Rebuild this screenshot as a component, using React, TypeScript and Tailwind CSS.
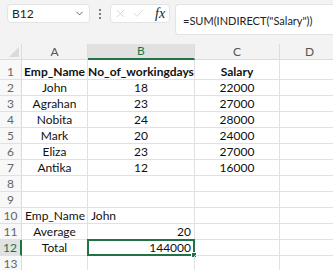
import { ChevronDown, X, Check } from 'lucide-react';

const font = { fontFamily: 'Lato, "Open Sans", sans-serif' };

type Align = 'left' | 'center' | 'right';
type Cell = { v?: string; align?: Align; bold?: boolean };

const rows: Cell[][] = [
  [
    { v: 'Emp_Name', align: 'center', bold: true },
    { v: 'No_of_workingdays', align: 'center', bold: true },
    { v: 'Salary', align: 'center', bold: true },
    {},
  ],
  [{ v: 'John', align: 'center' }, { v: '18', align: 'center' }, { v: '22000', align: 'center' }, {}],
  [{ v: 'Agrahan', align: 'center' }, { v: '23', align: 'center' }, { v: '27000', align: 'center' }, {}],
  [{ v: 'Nobita', align: 'center' }, { v: '24', align: 'center' }, { v: '28000', align: 'center' }, {}],
  [{ v: 'Mark', align: 'center' }, { v: '20', align: 'center' }, { v: '24000', align: 'center' }, {}],
  [{ v: 'Eliza', align: 'center' }, { v: '23', align: 'center' }, { v: '27000', align: 'center' }, {}],
  [{ v: 'Antika', align: 'center' }, { v: '12', align: 'center' }, { v: '16000', align: 'center' }, {}],
  [{}, {}, {}, {}],
  [{}, {}, {}, {}],
  [{ v: 'Emp_Name', align: 'left' }, { v: 'John', align: 'left' }, {}, {}],
  [{ v: 'Average', align: 'center' }, { v: '20', align: 'right' }, {}, {}],
  [{ v: 'Total', align: 'center' }, { v: '144000', align: 'right' }, {}, {}],
  [{}, {}, {}, {}],
];

const colW = ['w-[66px]', 'w-[107px]', 'w-[85px]', 'w-[60px]'];

const alignCls: Record<Align, string> = {
  left: 'justify-start pl-[3px]',
  center: 'justify-center',
  right: 'justify-end pr-[3px]',
};

function Toolbar() {
  return (
    <div className="h-[44px] bg-[#f3f3f3] flex items-start pt-[4px] pl-[7px] gap-[5px] shrink-0">
      <div className="w-[83px] h-[19px] bg-white rounded-[4px] border border-[#e3e3e3] flex items-center pl-[4px] pr-[4px] justify-between">
        <span className="text-[12px] leading-[14px] text-[#222]">B12</span>
        <ChevronDown className="w-[11px] h-[11px] text-[#555]" strokeWidth={2} />
      </div>
      <div className="w-[10px] h-[19px] flex flex-col items-center justify-center gap-[2px]">
        <span className="w-[2px] h-[2px] bg-[#555] rounded-full" />
        <span className="w-[2px] h-[2px] bg-[#555] rounded-full" />
        <span className="w-[2px] h-[2px] bg-[#555] rounded-full" />
      </div>
      <div className="w-[60px] h-[19px] bg-white rounded-[4px] border border-[#e3e3e3] flex items-center pl-[3px] gap-[5px]">
        <X className="w-[13px] h-[13px] text-[#c2c2c2]" strokeWidth={1.2} />
        <Check className="w-[13px] h-[13px] text-[#c2c2c2]" strokeWidth={1.2} />
        <span
          className="ml-[5px] text-[14px] leading-[14px] italic text-[#222]"
          style={{ fontFamily: '"Liberation Serif", serif' }}
        >
          fx
        </span>
      </div>
      <div className="flex-1 h-[31px] bg-white rounded-l-[4px] border border-r-0 border-[#e3e3e3] pl-[7px] pt-[2px]">
        <span className="text-[11px] leading-[14px] text-[#222]">=SUM(INDIRECT("Salary"))</span>
      </div>
    </div>
  );
}

function HeaderRow() {
  const letters = ['A', 'B', 'C', 'D'];
  return (
    <div className="flex h-[16px] bg-[#f3f3f3]">
      <div className="w-[22px] shrink-0 border-r border-b border-[#dcdcdc] relative">
        <svg className="absolute right-[2px] bottom-[2px]" width="10" height="10" viewBox="0 0 10 10">
          <polygon points="10,0 10,10 0,10" fill="#dadada" />
        </svg>
      </div>
      {letters.map((l, i) => (
        <div
          key={l}
          className={`${colW[i]} shrink-0 flex items-center justify-center text-[12px] leading-[14px] border-r border-[#dcdcdc] ${
            i === 1
              ? 'bg-[#e1e1e1] text-[#217346] border-b-2 border-b-[#217346]'
              : 'text-[#555] border-b border-b-[#dcdcdc]'
          }`}
        >
          {l}
        </div>
      ))}
    </div>
  );
}

export default function App() {
  return (
    <div className="w-[333px] h-[270px] overflow-hidden bg-white flex flex-col" style={font}>
      <Toolbar />
      <HeaderRow />
      {rows.map((r, ri) => {
        const selected = ri === 11;
        return (
          <div key={ri} className={`flex shrink-0 ${ri === 0 ? 'h-[20px]' : 'h-[16px]'}`}>
            <div
              className={`w-[22px] shrink-0 flex items-end justify-center pb-[1px] text-[12px] leading-[13px] border-b border-[#e1e1e1] ${
                selected
                  ? 'bg-[#e1e1e1] text-[#217346] border-r-2 border-r-[#217346]'
                  : 'bg-[#f8f8f8] text-[#666] border-r border-r-[#dcdcdc]'
              }`}
            >
              {ri + 1}
            </div>
            {r.map((c, ci) => (
              <div
                key={ci}
                className={`${colW[ci]} shrink-0 relative flex items-end pb-[1px] text-[12px] leading-[13px] text-[#111] border-r border-b border-[#e1e1e1] ${
                  alignCls[c.align ?? 'left']
                } ${c.bold ? 'font-bold' : ''}`}
              >
                {c.v}
                {selected && ci === 1 && (
                  <div className="absolute inset-[-1px] border-2 border-[#217346]">
                    <div className="absolute right-[-4px] bottom-[-4px] w-[6px] h-[6px] bg-[#217346] border border-white" />
                  </div>
                )}
              </div>
            ))}
          </div>
        );
      })}
    </div>
  );
}
